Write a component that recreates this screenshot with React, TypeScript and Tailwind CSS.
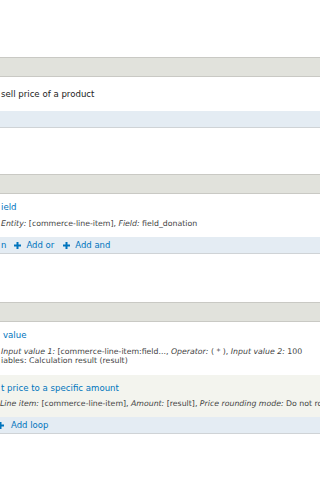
import React from 'react';

const font = { fontFamily: '"DejaVu Sans", Verdana, sans-serif' };

function Plus() {
  return (
    <svg width="7" height="7" viewBox="0 0 7 7" className="shrink-0">
      <rect x="2.5" y="0" width="2" height="7" fill="#0074bd" />
      <rect x="0" y="2.5" width="7" height="2" fill="#0074bd" />
    </svg>
  );
}

function Header() {
  return <div className="h-[20px] bg-[#e1e2dc] border-y border-[#c9c9c4]" />;
}

function AddBar({ children }: { children?: React.ReactNode }) {
  return (
    <div className="h-[17px] bg-[#e4ecf3] border-b border-[#cfd3d6] flex items-center text-[8.5px] text-[#0074bd] whitespace-nowrap">
      {children}
    </div>
  );
}

export default function App() {
  return (
    <div className="w-[320px] h-[480px] overflow-hidden bg-white text-[#222]" style={font}>
      <div className="h-[57px]" />

      {/* first table */}
      <Header />
      <div className="h-[34px] flex items-center pl-[1px] text-[8.6px] whitespace-nowrap">
        sell price of a product
      </div>
      <AddBar />

      <div className="h-[46px]" />

      {/* conditions */}
      <Header />
      <div className="h-[43px] whitespace-nowrap">
        <div className="pt-[7px] h-[19px] leading-[12px] text-[8.6px] text-[#0074bd] pl-[1px]">ield</div>
        <div className="mt-[6px] leading-[10px] text-[7.8px] text-[#444] pl-[1px]">
          <i>Entity:</i> [commerce-line-item], <i>Field:</i> field_donation
        </div>
      </div>
      <AddBar>
        <span className="pl-[1px]">n</span>
        <span className="ml-[8px] flex items-center gap-[5px]"><Plus />Add or</span>
        <span className="ml-[9px] flex items-center gap-[5px]"><Plus />Add and</span>
      </AddBar>

      <div className="h-[48px]" />

      {/* actions */}
      <Header />
      <div className="h-[53px] whitespace-nowrap">
        <div className="pt-[7px] h-[19px] leading-[12px] text-[8.6px] text-[#0074bd] pl-[3px]">value</div>
        <div className="mt-[6px] leading-[9px] text-[7.8px] text-[#444] pl-[1px]">
          <div><i>Input value 1:</i> [commerce-line-item:field..., <i>Operator:</i> ( * ), <i>Input value 2:</i> 100</div>
          <div>iables: Calculation result (result)</div>
        </div>
      </div>
      <div className="h-[42px] bg-[#f3f4ee] whitespace-nowrap overflow-hidden">
        <div className="pt-[7px] h-[19px] leading-[12px] text-[8.6px] text-[#0074bd] pl-[1px]">t price to a specific amount</div>
        <div className="mt-[5px] leading-[10px] text-[7.8px] text-[#444]">
          <i>Line item:</i> [commerce-line-item], <i>Amount:</i> [result], <i>Price rounding mode:</i> Do not ro
        </div>
      </div>
      <AddBar>
        <span className="-ml-[3px] flex items-center gap-[7px]"><Plus />Add loop</span>
      </AddBar>
    </div>
  );
}
